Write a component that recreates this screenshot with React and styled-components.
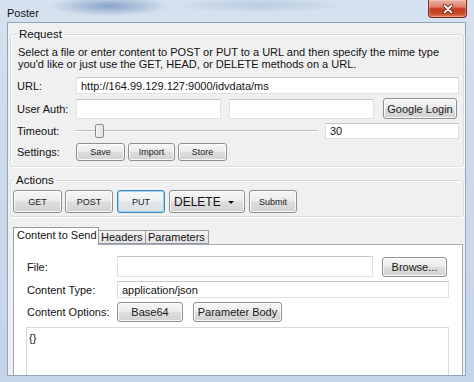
import styled, { createGlobalStyle } from "styled-components";

const GlobalStyle = createGlobalStyle`
  html, body {
    margin: 0;
    padding: 0;
  }
  body {
    width: 474px;
    height: 382px;
    overflow: hidden;
    font-family: "Liberation Sans", Arial, sans-serif;
    background: #c3d4e7;
  }
`;

const Window = styled.div`
  width: 474px;
  height: 382px;
  display: flex;
  flex-direction: column;
  box-sizing: border-box;
  background:
    radial-gradient(ellipse 60px 10px at 110px 6px, rgba(70, 110, 170, 0.55), transparent),
    radial-gradient(ellipse 90px 8px at 260px 5px, rgba(150, 175, 205, 0.45), transparent),
    linear-gradient(180deg, #d6e2ef 0%, #cddbeb 30%, #c4d5e8 100%);
`;

const TitleBar = styled.div`
  height: 22px;
  display: flex;
  align-items: flex-start;
  justify-content: space-between;
  padding-left: 7px;
  box-sizing: border-box;
`;

const Title = styled.span`
  font-size: 11px;
  line-height: 14px;
  margin-top: 6px;
  color: #111;
`;

const CloseButton = styled.div`
  width: 39px;
  height: 18px;
  margin-right: 7px;
  box-sizing: border-box;
  border: 1px solid #7a2b1d;
  border-top: none;
  border-radius: 0 0 4px 4px;
  background: linear-gradient(180deg, #eab2a4 0%, #de8068 40%, #c63c22 52%, #cc4528 78%, #e0805f 100%);
  box-shadow: inset 0 0 0 1px rgba(255, 220, 210, 0.35);
  display: flex;
  align-items: center;
  justify-content: center;
`;

const Client = styled.div`
  flex: 1;
  margin: 0 8px 6px 7px;
  border: 1px solid #93a4b8;
  background: #f0f0f0;
  padding: 0 1px 0 2px;
  display: flex;
  flex-direction: column;
  overflow: hidden;
  font-size: 11px;
`;

const Group = styled.fieldset`
  margin: ${(p) => p.$top}px 0 0 0;
  padding: ${(p) => p.$pad};
  border: 1px solid #d5dfe5;
  border-radius: 3px;
  box-shadow: inset 1px 1px 0 #fff, 1px 1px 0 #fff;
  min-width: 0;
`;

const Legend = styled.legend`
  padding: 0 2px;
  margin-left: ${(p) => p.$left || 0}px;
  font-size: 11.5px;
  line-height: 14px;
  color: #111;
`;

const Description = styled.p`
  margin: 5px 0 7px 1px;
  font-size: 11px;
  line-height: 12px;
  color: #111;
  white-space: nowrap;
`;

const FormGrid = styled.div`
  display: grid;
  grid-template-columns: ${(p) => p.$label}px minmax(0, 1fr);
  row-gap: 4px;
  align-items: center;
`;

const Label = styled.label`
  font-size: 11px;
  color: #111;
  white-space: nowrap;
  padding-left: ${(p) => p.$indent || 0}px;
`;

const Row = styled.div`
  display: flex;
  align-items: center;
  gap: ${(p) => p.$gap || 4}px;
  height: ${(p) => p.$h}px;
  min-width: 0;
`;

const TextInput = styled.input`
  box-sizing: border-box;
  height: ${(p) => p.$h || 17}px;
  width: ${(p) => (p.$w ? `${p.$w}px` : "0")};
  flex: ${(p) => (p.$w ? "none" : "1 1 0")};
  min-width: 0;
  margin: 0;
  padding: 0 4px;
  border: 1px solid #dde2e8;
  border-top-color: #c3c8cf;
  background: #fff;
  font-family: inherit;
  font-size: 11px;
  color: #111;
  outline: none;
`;

const Button = styled.button`
  box-sizing: border-box;
  width: ${(p) => p.$w}px;
  height: ${(p) => p.$h}px;
  margin: 0 ${(p) => p.$right || 0}px 0 0;
  padding: 0;
  flex: none;
  font-family: inherit;
  font-size: ${(p) => (p.$small ? 9 : 11)}px;
  color: #1a1a1a;
  border: 1px solid ${(p) => (p.$focus ? "#3f86b8" : "#8e8f8f")};
  border-radius: 3px;
  background: ${(p) =>
    p.$focus
      ? "linear-gradient(180deg, #f7f9fa 0%, #eef1f3 48%, #e3e7ea 52%, #dadfe2 100%)"
      : "linear-gradient(180deg, #f6f6f6 0%, #ececec 46%, #dedede 52%, #d2d2d2 100%)"};
  box-shadow: inset 0 0 0 1px ${(p) => (p.$focus ? "#9ed2ee" : "rgba(255, 255, 255, 0.85)")};
`;

const Slider = styled.div`
  position: relative;
  flex: 1 1 0;
  height: 16px;
  &::before {
    content: "";
    position: absolute;
    left: 0;
    right: 0;
    top: 7px;
    height: 1px;
    background: #b9b9b9;
    border-bottom: 1px solid #fff;
  }
`;

const Thumb = styled.div`
  position: absolute;
  left: 19px;
  top: 1px;
  width: 9px;
  height: 14px;
  box-sizing: border-box;
  border: 1px solid #8a8a8a;
  border-radius: 2px;
  background: linear-gradient(90deg, #f4f4f4, #e2e2e2);
`;

const ButtonBar = styled.div`
  display: flex;
  align-items: center;
  gap: ${(p) => p.$gap}px;
`;

const Combo = styled.div`
  box-sizing: border-box;
  width: 76px;
  height: 23px;
  margin-left: 1px;
  margin-right: 1px;
  padding: 0 10px 0 4px;
  display: flex;
  align-items: center;
  justify-content: space-between;
  border: 1px solid #8e8f8f;
  border-radius: 3px;
  background: linear-gradient(180deg, #f6f6f6 0%, #ececec 46%, #dedede 52%, #d2d2d2 100%);
  box-shadow: inset 0 0 0 1px rgba(255, 255, 255, 0.85);
  font-size: 12px;
  color: #111;
`;

const Arrow = styled.span`
  width: 0;
  height: 0;
  border-left: 3px solid transparent;
  border-right: 3px solid transparent;
  border-top: 3px solid #111;
  margin-top: 2px;
`;

const Tabs = styled.div`
  flex: 1;
  margin: 10px 1px 0 3px;
  display: flex;
  flex-direction: column;
  min-height: 0;
`;

const TabStrip = styled.div`
  display: flex;
  align-items: flex-end;
  height: 17px;
  position: relative;
  z-index: 1;
`;

const Tab = styled.div`
  box-sizing: border-box;
  width: ${(p) => p.$w}px;
  height: ${(p) => (p.$active ? 18 : 14)}px;
  margin-bottom: ${(p) => (p.$active ? -1 : 0)}px;
  border: 1px solid #959ba3;
  border-bottom: ${(p) => (p.$active ? "none" : "1px solid #959ba3")};
  margin-left: ${(p) => (p.$first ? 0 : -1)}px;
  background: ${(p) => (p.$active ? "#fff" : "linear-gradient(180deg, #f3f3f3, #e3e3e3)")};
  font-size: 11px;
  line-height: ${(p) => (p.$active ? 15 : 13)}px;
  padding-left: ${(p) => (p.$active ? 3 : 2)}px;
  color: #111;
  white-space: nowrap;
`;

const Panel = styled.div`
  flex: 1;
  border: 1px solid #a3a9b0;
  border-bottom: none;
  background: #fff;
  padding: 11px 13px 0 12px;
  overflow: hidden;
`;

const Editor = styled.textarea`
  grid-column: 1 / -1;
  box-sizing: border-box;
  height: 70px;
  margin: 1px 0 0 0;
  padding: 4px 2px;
  border: 1px solid #d6dbe1;
  resize: none;
  outline: none;
  font-family: inherit;
  font-size: 11px;
  color: #111;
`;

export default function App() {
  return (
    <>
      <GlobalStyle />
      <Window>
        <TitleBar>
          <Title>Poster</Title>
          <CloseButton>
            <svg width="12" height="10" viewBox="0 0 12 10">
              <path d="M2.5 1.5 L9.5 8.5 M9.5 1.5 L2.5 8.5" stroke="#5a1a10" strokeWidth="3.4" strokeLinecap="round" />
              <path d="M2.5 1.5 L9.5 8.5 M9.5 1.5 L2.5 8.5" stroke="#fff" strokeWidth="1.8" strokeLinecap="round" />
            </svg>
          </CloseButton>
        </TitleBar>
        <Client>
          <Group $top={4} $pad="0 4px 5px 6px">
            <Legend>Request</Legend>
            <Description>
              Select a file or enter content to POST or PUT to a URL and then specify the mime type
              <br />
              you'd like or just use the GET, HEAD, or DELETE methods on a URL.
            </Description>
            <FormGrid $label={59}>
              <Label>URL:</Label>
              <Row $h={17}>
                <TextInput readOnly defaultValue="http://164.99.129.127:9000/idvdata/ms" />
              </Row>
              <Label>User Auth:</Label>
              <Row $h={21} $gap={8}>
                <TextInput readOnly $h={20} />
                <TextInput readOnly $h={20} />
                <Button $w={74} $h={21} $right={2} style={{ marginLeft: 1 }}>
                  Google Login
                </Button>
              </Row>
              <Label>Timeout:</Label>
              <Row $h={16} $gap={8}>
                <Slider>
                  <Thumb />
                </Slider>
                <TextInput readOnly $w={134} $h={16} defaultValue="30" />
              </Row>
              <Label>Settings:</Label>
              <ButtonBar $gap={3}>
                <Button $small $w={49} $h={18}>Save</Button>
                <Button $small $w={47} $h={18}>Import</Button>
                <Button $small $w={49} $h={18}>Store</Button>
              </ButtonBar>
            </FormGrid>
          </Group>

          <Group $top={6} $pad="3px 2px 3px 2px">
            <Legend $left={1}>Actions</Legend>
            <ButtonBar $gap={3}>
              <Button $small $w={49} $h={23}>GET</Button>
              <Button $small $w={48} $h={23}>POST</Button>
              <Button $small $focus $w={48} $h={23} style={{ marginLeft: 1 }}>PUT</Button>
              <Combo>
                DELETE
                <Arrow />
              </Combo>
              <Button $small $w={48} $h={23}>Submit</Button>
            </ButtonBar>
          </Group>

          <Tabs>
            <TabStrip>
              <Tab $first $active $w={86}>Content to Send</Tab>
              <Tab $w={48}>Headers</Tab>
              <Tab $w={64}>Parameters</Tab>
            </TabStrip>
            <Panel>
              <FormGrid $label={91}>
                <Label $indent={1}>File:</Label>
                <Row $h={21} $gap={9}>
                  <TextInput readOnly $h={21} />
                  <Button $w={65} $h={20} $right={2}>Browse...</Button>
                </Row>
                <Label $indent={1}>Content Type:</Label>
                <Row $h={17}>
                  <TextInput readOnly defaultValue="application/json" />
                </Row>
                <Label $indent={1}>Content Options:</Label>
                <ButtonBar $gap={10}>
                  <Button $w={66} $h={20}>Base64</Button>
                  <Button $w={89} $h={20}>Parameter Body</Button>
                </ButtonBar>
                <Editor readOnly defaultValue="{}" />
              </FormGrid>
            </Panel>
          </Tabs>
        </Client>
      </Window>
    </>
  );
}
